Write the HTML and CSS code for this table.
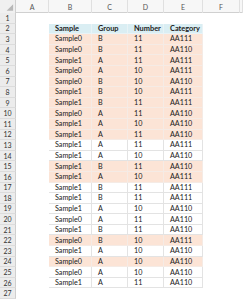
FILE: index.html
```html
<!DOCTYPE html>
<html>
<head>
<meta charset="utf-8">
<link rel="stylesheet" href="styles.css">
</head>
<body>
<div class="sheet">
  <div class="row hdr">
    <div class="corner"><svg width="16" height="13" viewBox="0 0 16 13"><polygon points="14,4 14,11 7,11" fill="#b8b8b8"/></svg></div>
    <div class="ch">A</div><div class="ch">B</div><div class="ch">C</div><div class="ch">D</div><div class="ch">E</div><div class="ch">F</div><div class="ch"></div>
  </div>
  <div class="row"><div class="rn">1</div><div class="c"></div><div class="c"></div><div class="c"></div><div class="c"></div><div class="c"></div><div class="c"></div><div class="c"></div></div>
  <div class="row"><div class="rn">2</div><div class="c"></div><div class="t th">Sample</div><div class="t th">Group</div><div class="t th">Number</div><div class="t th">Category</div><div class="c"></div><div class="c"></div></div>
  <div class="row"><div class="rn">3</div><div class="c"></div><div class="t p">Sample0</div><div class="t p">B</div><div class="t p">11</div><div class="t p">AA111</div><div class="c"></div><div class="c"></div></div>
  <div class="row"><div class="rn">4</div><div class="c"></div><div class="t p">Sample0</div><div class="t p">B</div><div class="t p">11</div><div class="t p">AA110</div><div class="c"></div><div class="c"></div></div>
  <div class="row"><div class="rn">5</div><div class="c"></div><div class="t p">Sample1</div><div class="t p">A</div><div class="t p">11</div><div class="t p">AA111</div><div class="c"></div><div class="c"></div></div>
  <div class="row"><div class="rn">6</div><div class="c"></div><div class="t p">Sample0</div><div class="t p">A</div><div class="t p">10</div><div class="t p">AA111</div><div class="c"></div><div class="c"></div></div>
  <div class="row"><div class="rn">7</div><div class="c"></div><div class="t p">Sample0</div><div class="t p">B</div><div class="t p">10</div><div class="t p">AA110</div><div class="c"></div><div class="c"></div></div>
  <div class="row"><div class="rn">8</div><div class="c"></div><div class="t p">Sample1</div><div class="t p">B</div><div class="t p">10</div><div class="t p">AA111</div><div class="c"></div><div class="c"></div></div>
  <div class="row"><div class="rn">9</div><div class="c"></div><div class="t p">Sample1</div><div class="t p">B</div><div class="t p">11</div><div class="t p">AA111</div><div class="c"></div><div class="c"></div></div>
  <div class="row"><div class="rn">10</div><div class="c"></div><div class="t p">Sample0</div><div class="t p">A</div><div class="t p">11</div><div class="t p">AA110</div><div class="c"></div><div class="c"></div></div>
  <div class="row"><div class="rn">11</div><div class="c"></div><div class="t p">Sample1</div><div class="t p">A</div><div class="t p">10</div><div class="t p">AA110</div><div class="c"></div><div class="c"></div></div>
  <div class="row"><div class="rn">12</div><div class="c"></div><div class="t p">Sample1</div><div class="t p">A</div><div class="t p">11</div><div class="t p">AA110</div><div class="c"></div><div class="c"></div></div>
  <div class="row"><div class="rn">13</div><div class="c"></div><div class="t">Sample1</div><div class="t">A</div><div class="t">11</div><div class="t">AA111</div><div class="c"></div><div class="c"></div></div>
  <div class="row"><div class="rn">14</div><div class="c"></div><div class="t">Sample1</div><div class="t">A</div><div class="t">10</div><div class="t">AA110</div><div class="c"></div><div class="c"></div></div>
  <div class="row"><div class="rn">15</div><div class="c"></div><div class="t p">Sample1</div><div class="t p">B</div><div class="t p">11</div><div class="t p">AA110</div><div class="c"></div><div class="c"></div></div>
  <div class="row"><div class="rn">16</div><div class="c"></div><div class="t p">Sample1</div><div class="t p">A</div><div class="t p">10</div><div class="t p">AA111</div><div class="c"></div><div class="c"></div></div>
  <div class="row"><div class="rn">17</div><div class="c"></div><div class="t">Sample1</div><div class="t">B</div><div class="t">11</div><div class="t">AA111</div><div class="c"></div><div class="c"></div></div>
  <div class="row"><div class="rn">18</div><div class="c"></div><div class="t">Sample1</div><div class="t">B</div><div class="t">11</div><div class="t">AA111</div><div class="c"></div><div class="c"></div></div>
  <div class="row"><div class="rn">19</div><div class="c"></div><div class="t">Sample1</div><div class="t">A</div><div class="t">10</div><div class="t">AA110</div><div class="c"></div><div class="c"></div></div>
  <div class="row"><div class="rn">20</div><div class="c"></div><div class="t">Sample0</div><div class="t">A</div><div class="t">11</div><div class="t">AA110</div><div class="c"></div><div class="c"></div></div>
  <div class="row"><div class="rn">21</div><div class="c"></div><div class="t">Sample1</div><div class="t">B</div><div class="t">11</div><div class="t">AA110</div><div class="c"></div><div class="c"></div></div>
  <div class="row"><div class="rn">22</div><div class="c"></div><div class="t p">Sample0</div><div class="t p">B</div><div class="t p">10</div><div class="t p">AA111</div><div class="c"></div><div class="c"></div></div>
  <div class="row"><div class="rn">23</div><div class="c"></div><div class="t">Sample1</div><div class="t">A</div><div class="t">10</div><div class="t">AA110</div><div class="c"></div><div class="c"></div></div>
  <div class="row"><div class="rn">24</div><div class="c"></div><div class="t p">Sample0</div><div class="t p">A</div><div class="t p">10</div><div class="t p">AA110</div><div class="c"></div><div class="c"></div></div>
  <div class="row"><div class="rn">25</div><div class="c"></div><div class="t">Sample0</div><div class="t">A</div><div class="t">10</div><div class="t">AA110</div><div class="c"></div><div class="c"></div></div>
  <div class="row"><div class="rn">26</div><div class="c"></div><div class="t">Sample1</div><div class="t">A</div><div class="t">11</div><div class="t">AA110</div><div class="c"></div><div class="c"></div></div>
  <div class="row"><div class="rn">27</div><div class="c"></div><div class="c"></div><div class="c"></div><div class="c"></div><div class="c"></div><div class="c"></div><div class="c"></div></div>
</div>
</body>
</html>
```
FILE: styles.css
```css
html, body {
  margin: 0;
  padding: 0;
  background: #ffffff;
}
.sheet {
  width: 243px;
  height: 300px;
  overflow: hidden;
  font-family: Lato, "Liberation Sans", sans-serif;
  color: #1a1a1a;
}
.row {
  display: grid;
  grid-template-columns: 16px 33px 43px 36px 36px 39px 37px 1fr;
  height: 10.6px;
}
.row.hdr {
  height: 13px;
  background: #f7f7f7;
  border-bottom: 1px solid #d0d0d0;
  box-sizing: border-box;
}
.corner {
  background: #f0f0f0;
  border-right: 1px solid #d0d0d0;
  display: flex;
}
.ch {
  font-size: 7px;
  color: #555;
  display: flex;
  align-items: center;
  justify-content: center;
  border-right: 1px solid #e0e0e0;
}
.rn {
  background: #ececec;
  border-right: 1px solid #cfcfcf;
  border-bottom: 1px solid #dcdcdc;
  box-sizing: border-box;
  font-size: 7px;
  color: #333;
  display: flex;
  align-items: center;
  justify-content: center;
}
.c {
  background: #ffffff;
}
.t {
  font-size: 7.2px;
  display: flex;
  align-items: center;
  padding-left: 6px;
  box-sizing: border-box;
  border-right: 1px solid #e3e3e3;
  border-bottom: 1px solid #e3e3e3;
  white-space: nowrap;
  background: #ffffff;
}
.t.p {
  background: #fce4d6;
  border-color: #f5ebe5;
}
.t.th {
  background: #daeef3;
  font-weight: bold;
  font-size: 7.4px;
  border-color: #e9f3f6;
}
```
